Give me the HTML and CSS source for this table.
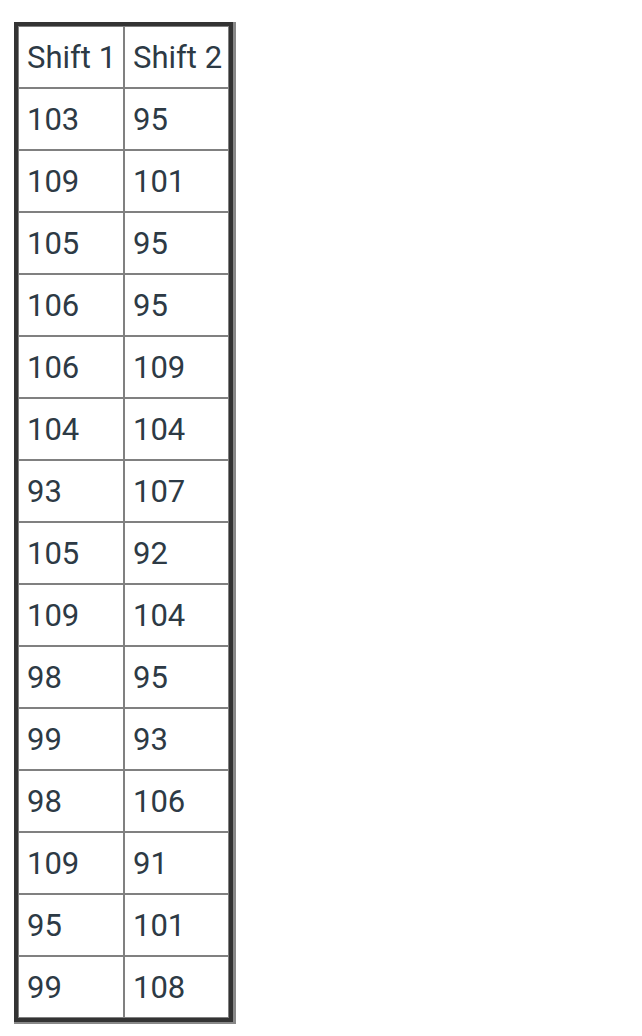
FILE: index.html
```html
<!DOCTYPE html>
<html>
<head>
<meta charset="utf-8">
<link rel="stylesheet" href="styles.css">
</head>
<body>
<div class="frame">
<table class="data">
<tr><td>Shift 1</td><td>Shift 2</td></tr>
<tr><td>103</td><td>95</td></tr>
<tr><td>109</td><td>101</td></tr>
<tr><td>105</td><td>95</td></tr>
<tr><td>106</td><td>95</td></tr>
<tr><td>106</td><td>109</td></tr>
<tr><td>104</td><td>104</td></tr>
<tr><td>93</td><td>107</td></tr>
<tr><td>105</td><td>92</td></tr>
<tr><td>109</td><td>104</td></tr>
<tr><td>98</td><td>95</td></tr>
<tr><td>99</td><td>93</td></tr>
<tr><td>98</td><td>106</td></tr>
<tr><td>109</td><td>91</td></tr>
<tr><td>95</td><td>101</td></tr>
<tr><td>99</td><td>108</td></tr>
</table>
</div>
</body>
</html>
```

FILE: styles.css
```css
html, body {
  margin: 0;
  padding: 0;
  background: #ffffff;
}
body {
  padding: 22px 0 0 14px;
  font-family: Roboto, "Liberation Sans", sans-serif;
  color: #2d3a45;
}
.frame {
  display: inline-block;
  border-right: 3px solid #888888;
  border-bottom: 2px solid #888888;
}
.data {
  border: 4px solid #333333;
  border-collapse: separate;
  border-spacing: 0;
  table-layout: fixed;
  width: 219px;
}
.data td {
  border: 1px solid #808080;
  width: 106px;
  height: 62px;
  padding: 1px 0 0 8px;
  font-size: 31px;
  line-height: 36px;
  white-space: nowrap;
  overflow: visible;
  vertical-align: middle;
  box-sizing: border-box;
}
.data td + td {
  width: 105px;
}
```
